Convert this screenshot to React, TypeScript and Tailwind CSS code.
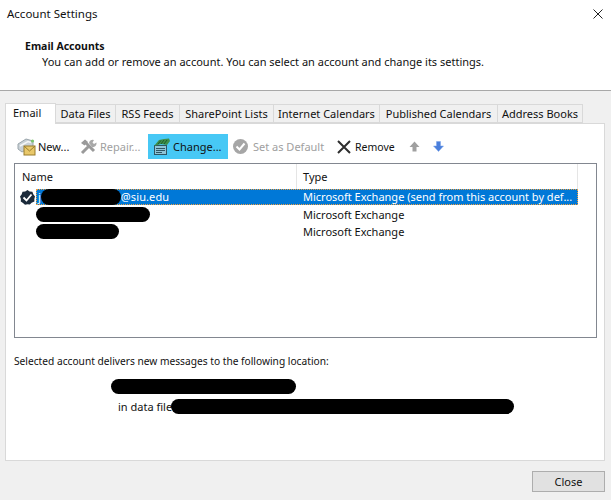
const font = "font-['Noto_Sans','Open_Sans',sans-serif]";

function Envelope() {
  return (
    <svg width="19" height="19" viewBox="0 0 19 19" className="shrink-0">
      <path d="M1 7 L9 2 L16 4 L16 9 L5 15 L1 12 Z" fill="#c9d1d6" stroke="#9aa5ab" strokeWidth="1" />
      <path d="M3 9 L11 4.5 L14 5.5" fill="none" stroke="#f4f6f7" strokeWidth="1.5" />
      <rect x="7" y="9" width="11" height="9" fill="#e9c86a" stroke="#9a7d2c" />
      <path d="M7 9 L12.5 14 L18 9" fill="none" stroke="#9a7d2c" />
      <circle cx="15.5" cy="4" r="1.6" fill="#7cc46a" />
    </svg>
  );
}

function Tools() {
  return (
    <svg width="17" height="16" viewBox="0 0 17 16" className="shrink-0">
      <path d="M2 14 L9.5 6.5 M4 2 L14 12" stroke="#9a9a9a" strokeWidth="3" fill="none" />
      <path d="M1 4 L5 0.5 L8 3 L4.5 6.5 Z" fill="#9a9a9a" />
      <path d="M9 4 A3.6 3.6 0 0 1 14 1 L12.5 3.4 L14 5 L16.4 3.6 A3.6 3.6 0 0 1 12 8 Z" fill="#a8a8a8" />
    </svg>
  );
}

function Change() {
  return (
    <svg width="18" height="18" viewBox="0 0 18 18" className="shrink-0">
      <rect x="1.5" y="7.5" width="12" height="9" fill="#8fc4d6" stroke="#2f5563" />
      <path d="M3 10.5h9M3 12.5h9M3 14.5h6" stroke="#2f5563" strokeWidth="1" />
      <path d="M1 8 L6 2 L11 1 L16 0.5 L17 3 L14 7 L8 6 Z" fill="#3f8f4a" />
      <path d="M5 6 L8 2.5 M8 6 L11 2 M11 6 L14 2" stroke="#1d5a2b" strokeWidth="1" />
    </svg>
  );
}

function GrayCheck() {
  return (
    <svg width="15" height="15" viewBox="0 0 15 15" className="shrink-0">
      <circle cx="7.5" cy="7.5" r="7.5" fill="#a6a6a6" />
      <path d="M3.5 7.5 L6.5 10.5 L11.5 4.5" fill="none" stroke="#ffffff" strokeWidth="2" />
    </svg>
  );
}

function DarkCheck() {
  return (
    <svg width="15" height="15" viewBox="0 0 15 15" className="shrink-0">
      <path d="M7.5 0 L9.6 1.5 L12.4 1.7 L13.3 4.2 L15 6.4 L14.3 9 L14.4 11.4 L11.6 12.8 L9.8 14.6 L7.5 14.2 L5 14.8 L3 12.9 L0.8 11.6 L0.9 9 L0 6.6 L1.6 4.4 L2.5 1.8 L5.2 1.5 Z" fill="#1b2a3a" />
      <path d="M3.5 7.5 L6.5 10.5 L11.5 4.5" fill="none" stroke="#ffffff" strokeWidth="1.8" />
    </svg>
  );
}

function RemoveX() {
  return (
    <svg width="14" height="14" viewBox="0 0 14 14" className="shrink-0">
      <path d="M1 1 L13 13 M13 1 L1 13" stroke="#2e2e2e" strokeWidth="2" />
    </svg>
  );
}

function Arrow({ down }: { down?: boolean }) {
  return (
    <svg width="11" height="11" viewBox="0 0 11 11" className="shrink-0">
      {down ? (
        <path d="M3.5 0.5 H7.5 V5 H10.5 L5.5 10.5 L0.5 5 H3.5 Z" fill="#4a7fdc" stroke="#7ba3e8" strokeWidth="0.5" />
      ) : (
        <path d="M3.5 10.5 H7.5 V6 H10.5 L5.5 0.5 L0.5 6 H3.5 Z" fill="#a0a0a0" />
      )}
    </svg>
  );
}

function Blob({ className }: { className: string }) {
  return <span className={`inline-block shrink-0 rounded-full bg-black ${className}`} />;
}

const tabs: [string, string][] = [
  ["Data Files", "w-[60px]"],
  ["RSS Feeds", "w-[64px]"],
  ["SharePoint Lists", "w-[94px]"],
  ["Internet Calendars", "w-[106px]"],
  ["Published Calendars", "w-[118px]"],
  ["Address Books", "w-[85px]"],
];

export default function App() {
  return (
    <div className={`flex h-[500px] w-[611px] flex-col overflow-hidden bg-[#f0f0f0] text-[11px] leading-[16px] text-[#111] ${font}`}>
      <div className="h-[91px] shrink-0 border-b border-[#a8a8a8] bg-white">
        <div className="flex h-[28px] items-center justify-between pl-[7px] pr-[8px]">
          <span className="text-[11.5px]">Account Settings</span>
          <svg width="10" height="10" viewBox="0 0 10 10">
            <path d="M0.5 0.5 L9.5 9.5 M9.5 0.5 L0.5 9.5" stroke="#222" strokeWidth="1" />
          </svg>
        </div>
        <div className="pl-[25px] pt-[10px] text-[10.5px] font-bold">Email Accounts</div>
        <div className="whitespace-nowrap pl-[42px]">You can add or remove an account. You can select an account and change its settings.</div>
      </div>

      <div className="flex h-[32px] shrink-0 items-end pl-[5px]">
        <div className="z-10 -mb-px flex h-[21px] w-[51px] items-center border border-b-0 border-[#d9d9d9] bg-white pb-[2px] pl-[7px]">Email</div>
        {tabs.map(([label, w]) => (
          <div key={label} className={`flex h-[19px] items-center justify-center border border-l-0 border-[#d9d9d9] bg-[#f0f0f0] whitespace-nowrap ${w}`}>
            {label}
          </div>
        ))}
      </div>

      <div className="ml-[5px] flex h-[338px] w-[600px] shrink-0 flex-col border border-[#d9d9d9] bg-white px-[8px]">
        <div className="mt-[10px] flex h-[25px] shrink-0 items-center">
          <div className="ml-[3px] flex w-[61px] items-center gap-[2px]">
            <Envelope />
            <span>New...</span>
          </div>
          <div className="flex w-[70px] items-center gap-[3px] pl-[2px] text-[#a0a0a0]">
            <Tools />
            <span>Repair...</span>
          </div>
          <div className="flex h-[25px] w-[80px] items-center gap-[2px] bg-[#47c8f5] pl-[5px]">
            <Change />
            <span>Change...</span>
          </div>
          <div className="ml-[5px] flex w-[104px] items-center gap-[5px] text-[#a0a0a0]">
            <GrayCheck />
            <span>Set as Default</span>
          </div>
          <div className="flex w-[72px] items-center gap-[4px]">
            <RemoveX />
            <span className="text-[10.5px]">Remove</span>
          </div>
          <div className="w-[24px]"><Arrow /></div>
          <div><Arrow down /></div>
        </div>

        <div className="mt-[4px] h-[175px] w-[583px] shrink-0 border border-[#828790] bg-white">
          <div className="flex h-[25px] items-center">
            <div className="flex h-full w-[282px] items-center border-r border-[#e5e5e5] pl-[7px]">Name</div>
            <div className="flex h-full w-[281px] items-center border-r border-[#e5e5e5] pl-[6px]">Type</div>
          </div>
          <div className="flex h-[16px] items-center">
            <div className="flex w-[21px] justify-end pr-[1px]"><DarkCheck /></div>
            <div className="flex h-full w-[542px] items-center border border-dotted border-[#f0a040] bg-[#0078d7] text-white">
              <div className="flex w-[266px] items-center pl-[1px]">
                <span>j</span>
                <Blob className="h-[16px] w-[80px]" />
                <span className="tracking-[0.1px]">@siu.edu</span>
              </div>
              <span className="whitespace-nowrap">Microsoft Exchange (send from this account by def...</span>
            </div>
          </div>
          <div className="mt-[1px] flex h-[17px] items-center">
            <div className="flex w-[288px] items-center pl-[21px]"><Blob className="h-[15px] w-[114px]" /></div>
            <span>Microsoft Exchange</span>
          </div>
          <div className="flex h-[17px] items-center">
            <div className="flex w-[288px] items-center pl-[21px]"><Blob className="h-[15px] w-[83px]" /></div>
            <span>Microsoft Exchange</span>
          </div>
        </div>

        <div className="mt-[15px] whitespace-nowrap text-[10.2px]">Selected account delivers new messages to the following location:</div>
        <div className="ml-[97px] mt-[10px] flex h-[15px] items-center"><Blob className="h-[15px] w-[185px]" /></div>
        <div className="ml-[104px] mt-[5px] flex h-[15px] items-center">
          <span className="w-[53px] shrink-0 whitespace-nowrap">in data file</span>
          <Blob className="h-[15px] w-[343px]" />
        </div>
      </div>

      <div className="flex flex-1 items-start justify-end pr-[6px] pt-[10px]">
        <button className="flex h-[21px] w-[73px] items-center justify-center border border-[#adadad] bg-[#e1e1e1]">Close</button>
      </div>
    </div>
  );
}
